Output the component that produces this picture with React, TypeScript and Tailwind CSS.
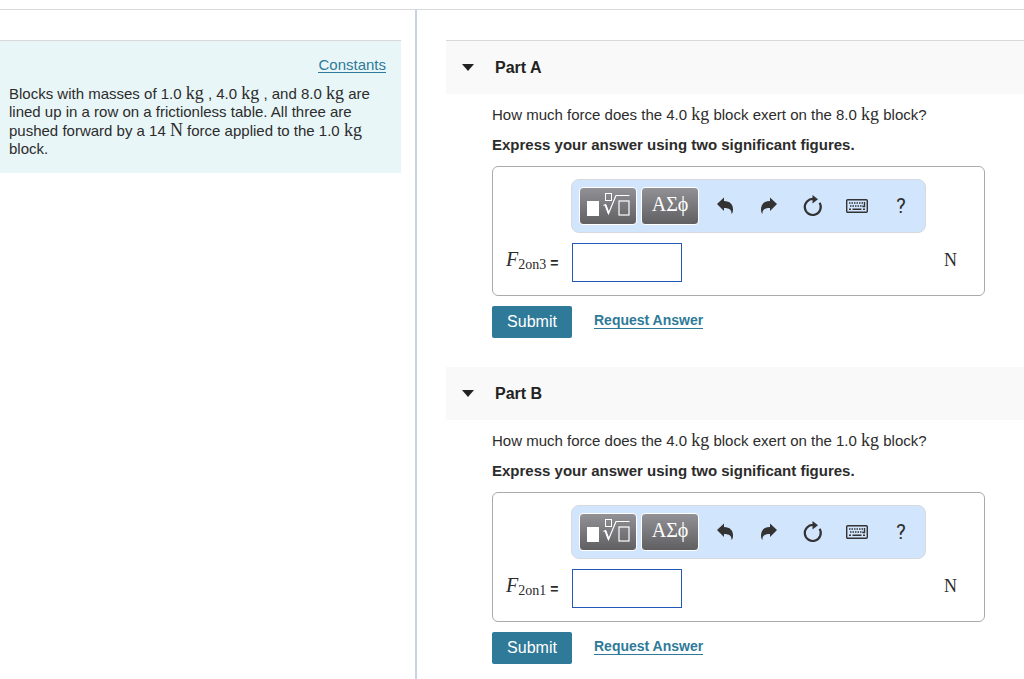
import { useState } from "react";
import type { ReactNode } from "react";

type PartProps = {
  id: string;
  title: string;
  mass: string;
  subscript: string;
  first?: boolean;
};

function Unit({ children }: { children: ReactNode }) {
  return (
    <span className="font-['Liberation_Serif',serif] text-[18px] leading-none">
      {children}
    </span>
  );
}

function TemplatesIcon() {
  return (
    <svg width="44" height="28" viewBox="0 0 44 28" fill="none" stroke="white">
      <rect x="1" y="9" width="12" height="15" fill="white" stroke="none" />
      <rect x="19.5" y="1.5" width="6" height="7" />
      <path d="M17.500 13.500l2-1 3 9 7.500-18h13.500" strokeWidth="1.200" />
      <path d="M19.500 13l3 8" strokeWidth="2" />
      <rect x="33" y="9" width="10" height="14" strokeWidth="1.200" />
    </svg>
  );
}

function UndoIcon() {
  return (
    <svg width="18" height="18" viewBox="0 0 18 18" fill="#333">
      <path d="M1 7L8 .5v3.500c6 0 9 3.500 9 8.500 0 2-.5 3.500-1.500 4.500.3-4-2-6-7.500-6v3z" />
    </svg>
  );
}

function RedoIcon() {
  return (
    <svg width="18" height="18" viewBox="0 0 18 18" fill="#333">
      <path d="M17 7L10 .5v3.500C4 4 1 7.500 1 12.500c0 2 .5 3.500 1.500 4.500-.3-4 2-6 7.500-6v3z" />
    </svg>
  );
}

function ResetIcon() {
  return (
    <svg width="20" height="22" viewBox="0 0 20 22" fill="none">
      <path
        d="M16.600 7.800A8 8 0 1 1 10.500 4"
        stroke="#333"
        strokeWidth="2.200"
      />
      <path d="M9.500 0l5.500 4.200-5.500 4.300z" fill="#333" />
    </svg>
  );
}

function KeyboardIcon() {
  return (
    <svg width="22" height="14" viewBox="0 0 22 14" fill="none" stroke="#333">
      <rect x=".7" y=".7" width="20.600" height="12.600" rx="1" strokeWidth="1.400" />
      <path d="M3 4h14M4 7h13" strokeWidth="1.500" strokeDasharray="1.500 1" />
      <path d="M18.500 3v4.500h-2M3 10.200h2M6.500 10.200h9M17 10.200h2" strokeWidth="1.400" />
    </svg>
  );
}

function Part({ id, title, mass, subscript, first }: PartProps) {
  const [answer, setAnswer] = useState("");

  const mathButton =
    "flex h-[38px] w-[58px] items-center justify-center rounded border border-white bg-linear-to-b from-[#929296] to-[#606063] text-white";
  const toolButton = "flex h-[38px] w-11 items-center justify-center";

  return (
    <section>
      <h2
        className={
          first
            ? "border-t border-[#d9d9d9] bg-[#f9f9f9]"
            : "bg-[#f9f9f9]"
        }
      >
        <button className="flex h-[53px] w-full items-center px-4 text-[16px] font-bold text-[#222]">
          <svg width="12" height="7" viewBox="0 0 12 7" fill="#222">
            <path d="M0 0h12L6 7z" />
          </svg>
          <span className="ml-[21px]">{title}</span>
        </button>
      </h2>

      <div className="pl-[46px]">
        <p className="mt-[11px] text-[15px] leading-[18px]">
          How much force does the 4.0 <Unit>kg</Unit> block exert on the {mass}{" "}
          <Unit>kg</Unit> block?
        </p>
        <p className="mt-3 text-[15px] leading-[18px] font-bold">
          Express your answer using two significant figures.
        </p>

        <div className="mt-3 mr-[39px] h-[130px] max-w-[493px] rounded-md border border-[#aaa] pt-3">
          <div className="ml-[78px] flex h-[54px] w-[355px] items-center gap-1 rounded-lg border border-[#d6d9dd] bg-[#d1e5fd] pl-[7px]">
            <button className={mathButton} aria-label="Templates">
              <TemplatesIcon />
            </button>
            <button className={mathButton} aria-label="Symbols">
              <span className="pb-1 font-['Liberation_Serif',serif] text-[20px]">
                ΑΣϕ
              </span>
            </button>
            <div className="flex">
              <button className={toolButton} aria-label="Undo">
                <UndoIcon />
              </button>
              <button className={toolButton} aria-label="Redo">
                <RedoIcon />
              </button>
              <button className={toolButton} aria-label="Reset">
                <ResetIcon />
              </button>
              <button className={toolButton} aria-label="Keyboard shortcuts">
                <KeyboardIcon />
              </button>
              <button
                className={`${toolButton} font-[Roboto,sans-serif] text-[20px]`}
                aria-label="Help"
              >
                ?
              </button>
            </div>
          </div>

          <div className="mt-[10px] flex items-center">
            <label
              htmlFor={id}
              className="flex w-[79px] items-center pb-1 pl-[13px] font-['Liberation_Serif',serif] text-[20px] leading-5 whitespace-nowrap"
            >
              <i className="pb-1">F</i>
              <span className="pt-2 text-[14px]">{subscript}</span>
              <span className="ml-1 pt-1 font-['Liberation_Sans',sans-serif] text-[14px] font-bold">
                =
              </span>
            </label>
            <input
              id={id}
              type="text"
              value={answer}
              onChange={(e) => setAnswer(e.target.value)}
              className="h-[39px] w-[110px] border border-[#2458b8] bg-white px-2"
            />
            <span className="mr-[27px] ml-auto pb-1">
              <Unit>N</Unit>
            </span>
          </div>
        </div>

        <div className="mt-[10px] flex items-center">
          <button className="h-8 w-20 rounded-xs bg-[#2f7a99] text-[16px] text-white">
            Submit
          </button>
          <a
            href="#"
            className="mb-[3px] ml-[22px] border-b border-[#2f7a99] text-[14px] leading-[15px] font-bold text-[#2f7a99]"
          >
            Request Answer
          </a>
        </div>
      </div>
    </section>
  );
}

function App() {
  return (
    <div className="flex min-h-screen flex-col bg-white font-['Liberation_Sans',Arial,sans-serif] text-[#2c2c2c]">
      <header className="h-[10px] border-b border-[#d9d9d9]" />
      <div className="flex flex-1">
        <aside className="w-[417px] shrink-0 border-r-2 border-[#c8d4e3] pt-[30px] pr-[14px]">
          <div className="border-t border-[#d9d9d9] bg-[#e9f6f8] pt-4 pr-[15px] pb-[15px] pl-[9px] text-[15px] leading-[18px]">
            <div className="flex justify-end">
              <a
                href="#"
                className="border-b border-[#2f7a99] leading-[15px] text-[#2f7a99]"
              >
                Constants
              </a>
            </div>
            <p className="mt-[11px]">
              Blocks with masses of 1.0 <Unit>kg</Unit> , 4.0 <Unit>kg</Unit> ,
              and 8.0 <Unit>kg</Unit> are lined up in a row on a frictionless
              table. All three are pushed forward by a 14 <Unit>N</Unit> force
              applied to the 1.0 <Unit>kg</Unit> block.
            </p>
          </div>
        </aside>

        <main className="min-w-0 flex-1 pt-[30px] pl-[29px]">
          <Part id="answer-a" title="Part A" mass="8.0" subscript="2on3" first />
          <div className="h-[29px]" />
          <Part id="answer-b" title="Part B" mass="1.0" subscript="2on1" />
        </main>
      </div>
    </div>
  );
}

export default App;
